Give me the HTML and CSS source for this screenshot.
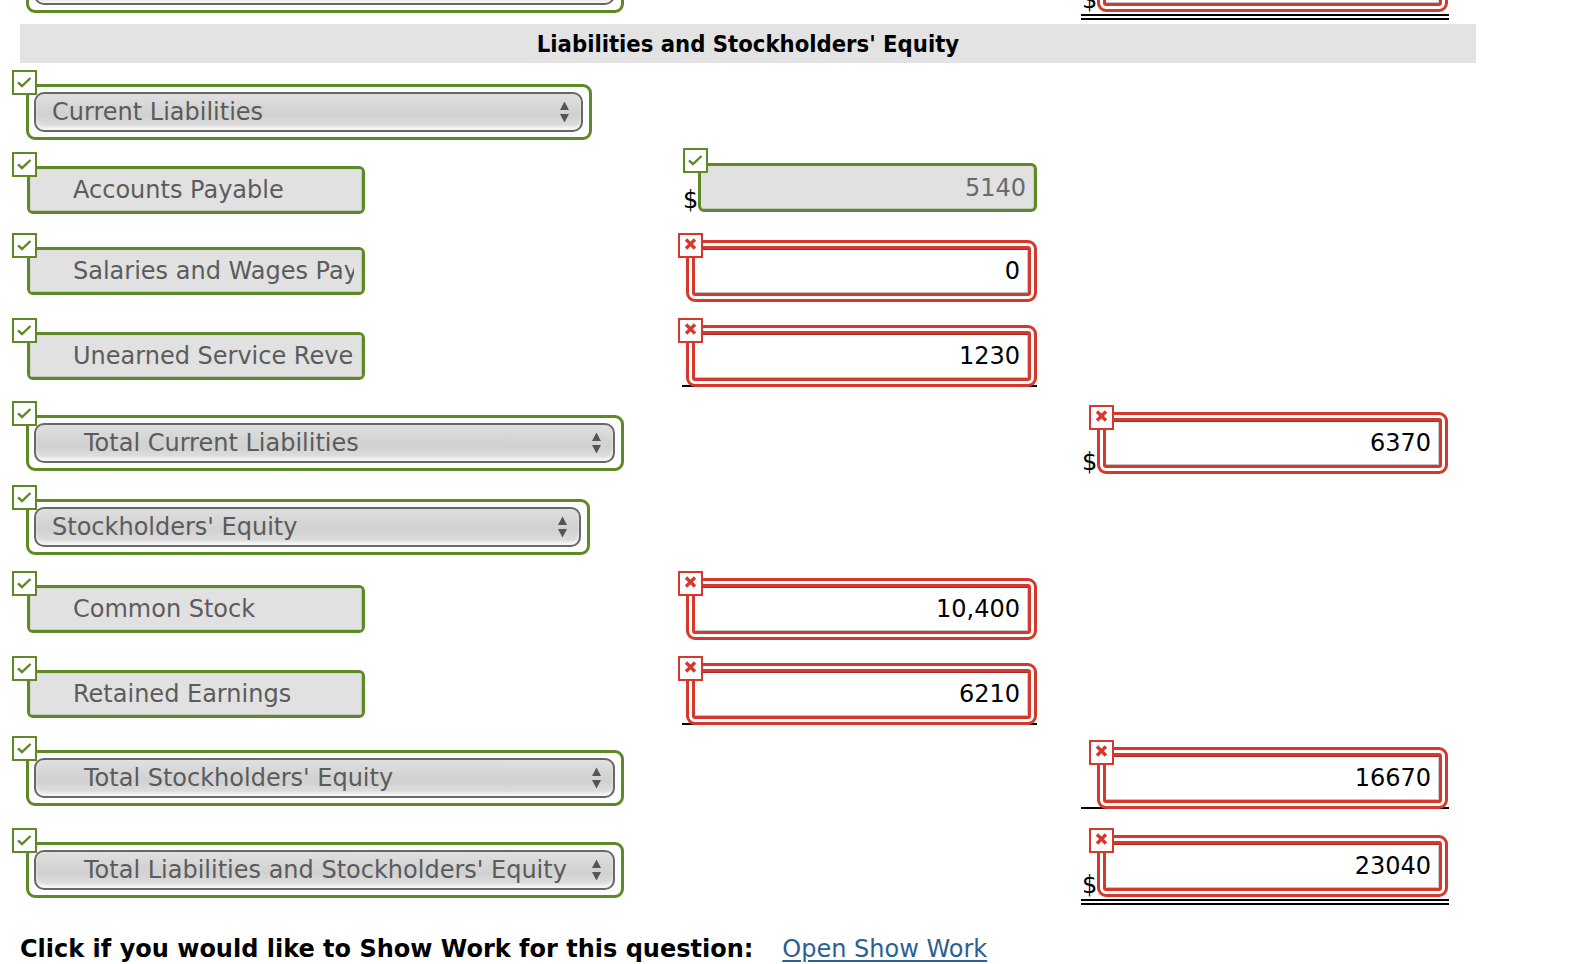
FILE: index.html
```html
<!DOCTYPE html>
<html lang="en">
<head>
<meta charset="utf-8">
<title>Liabilities and Stockholders' Equity</title>
<link rel="stylesheet" href="styles.css">
</head>
<body>
<div class="page">

  <div class="row row-first">
    <div class="c1">
      <div class="field field-sel">
        <svg class="badge" width="25" height="25" viewBox="0 0 25 25"><rect x="1" y="1" width="23" height="23" class="bx-ok"/><path d="M6 12.3 L10 16 L18.5 8" class="mk-ok"/></svg>
        <div class="sel-wrap w-wide"><div class="select indent"><span>Total Assets</span><svg class="arrows" width="11" height="24" viewBox="0 0 11 24"><path d="M1 10 L5.5 1.5 L10 10 Z M1 14 L10 14 L5.5 22.5 Z"/></svg></div></div>
      </div>
    </div>
    <div class="c2"></div>
    <div class="c3 dbl">
      <span class="dollar">$</span>
      <div class="field ring">
        <svg class="badge" width="25" height="25" viewBox="0 0 25 25"><rect x="1" y="1" width="23" height="23" class="bx-bad"/><path d="M8 6.5 L17 15.5 M17 6.5 L8 15.5" class="mk-bad"/></svg>
        <div class="ring-in">23040</div>
      </div>
    </div>
  </div>

  <div class="section-head">Liabilities and Stockholders' Equity</div>

  <div class="row row-sel">
    <div class="c1">
      <div class="field field-sel">
        <svg class="badge" width="25" height="25" viewBox="0 0 25 25"><rect x="1" y="1" width="23" height="23" class="bx-ok"/><path d="M6 12.3 L10 16 L18.5 8" class="mk-ok"/></svg>
        <div class="sel-wrap"><div class="select"><span>Current Liabilities</span><svg class="arrows" width="11" height="24" viewBox="0 0 11 24"><path d="M1 10 L5.5 1.5 L10 10 Z M1 14 L10 14 L5.5 22.5 Z"/></svg></div></div>
      </div>
    </div>
    <div class="c2"></div>
    <div class="c3"></div>
  </div>

  <div class="row row-green">
    <div class="c1">
      <div class="field field-lbl">
        <svg class="badge" width="25" height="25" viewBox="0 0 25 25"><rect x="1" y="1" width="23" height="23" class="bx-ok"/><path d="M6 12.3 L10 16 L18.5 8" class="mk-ok"/></svg>
        <div class="lbl"><div class="lbl-in"><span>Accounts Payable</span></div></div>
      </div>
    </div>
    <div class="c2 lift">
      <span class="dollar">$</span>
      <div class="field field-num">
        <svg class="badge" width="25" height="25" viewBox="0 0 25 25"><rect x="1" y="1" width="23" height="23" class="bx-ok"/><path d="M6 12.3 L10 16 L18.5 8" class="mk-ok"/></svg>
        <div class="num-ok">5140</div>
      </div>
    </div>
    <div class="c3"></div>
  </div>

  <div class="row">
    <div class="c1">
      <div class="field field-lbl">
        <svg class="badge" width="25" height="25" viewBox="0 0 25 25"><rect x="1" y="1" width="23" height="23" class="bx-ok"/><path d="M6 12.3 L10 16 L18.5 8" class="mk-ok"/></svg>
        <div class="lbl"><div class="lbl-in"><span>Salaries and Wages Payable</span></div></div>
      </div>
    </div>
    <div class="c2">
      <div class="field ring">
        <svg class="badge" width="25" height="25" viewBox="0 0 25 25"><rect x="1" y="1" width="23" height="23" class="bx-bad"/><path d="M8 6.5 L17 15.5 M17 6.5 L8 15.5" class="mk-bad"/></svg>
        <div class="ring-in">0</div>
      </div>
    </div>
    <div class="c3"></div>
  </div>

  <div class="row">
    <div class="c1">
      <div class="field field-lbl">
        <svg class="badge" width="25" height="25" viewBox="0 0 25 25"><rect x="1" y="1" width="23" height="23" class="bx-ok"/><path d="M6 12.3 L10 16 L18.5 8" class="mk-ok"/></svg>
        <div class="lbl"><div class="lbl-in"><span>Unearned Service Revenue</span></div></div>
      </div>
    </div>
    <div class="c2 ruled">
      <div class="field ring">
        <svg class="badge" width="25" height="25" viewBox="0 0 25 25"><rect x="1" y="1" width="23" height="23" class="bx-bad"/><path d="M8 6.5 L17 15.5 M17 6.5 L8 15.5" class="mk-bad"/></svg>
        <div class="ring-in">1230</div>
      </div>
    </div>
    <div class="c3"></div>
  </div>

  <div class="row row-total">
    <div class="c1">
      <div class="field field-sel">
        <svg class="badge" width="25" height="25" viewBox="0 0 25 25"><rect x="1" y="1" width="23" height="23" class="bx-ok"/><path d="M6 12.3 L10 16 L18.5 8" class="mk-ok"/></svg>
        <div class="sel-wrap w-wide"><div class="select indent"><span>Total Current Liabilities</span><svg class="arrows" width="11" height="24" viewBox="0 0 11 24"><path d="M1 10 L5.5 1.5 L10 10 Z M1 14 L10 14 L5.5 22.5 Z"/></svg></div></div>
      </div>
    </div>
    <div class="c2"></div>
    <div class="c3">
      <span class="dollar">$</span>
      <div class="field ring">
        <svg class="badge" width="25" height="25" viewBox="0 0 25 25"><rect x="1" y="1" width="23" height="23" class="bx-bad"/><path d="M8 6.5 L17 15.5 M17 6.5 L8 15.5" class="mk-bad"/></svg>
        <div class="ring-in">6370</div>
      </div>
    </div>
  </div>

  <div class="row row-sel">
    <div class="c1">
      <div class="field field-sel">
        <svg class="badge" width="25" height="25" viewBox="0 0 25 25"><rect x="1" y="1" width="23" height="23" class="bx-ok"/><path d="M6 12.3 L10 16 L18.5 8" class="mk-ok"/></svg>
        <div class="sel-wrap w-mid"><div class="select"><span>Stockholders' Equity</span><svg class="arrows" width="11" height="24" viewBox="0 0 11 24"><path d="M1 10 L5.5 1.5 L10 10 Z M1 14 L10 14 L5.5 22.5 Z"/></svg></div></div>
      </div>
    </div>
    <div class="c2"></div>
    <div class="c3"></div>
  </div>

  <div class="row">
    <div class="c1">
      <div class="field field-lbl">
        <svg class="badge" width="25" height="25" viewBox="0 0 25 25"><rect x="1" y="1" width="23" height="23" class="bx-ok"/><path d="M6 12.3 L10 16 L18.5 8" class="mk-ok"/></svg>
        <div class="lbl"><div class="lbl-in"><span>Common Stock</span></div></div>
      </div>
    </div>
    <div class="c2">
      <div class="field ring">
        <svg class="badge" width="25" height="25" viewBox="0 0 25 25"><rect x="1" y="1" width="23" height="23" class="bx-bad"/><path d="M8 6.5 L17 15.5 M17 6.5 L8 15.5" class="mk-bad"/></svg>
        <div class="ring-in">10,400</div>
      </div>
    </div>
    <div class="c3"></div>
  </div>

  <div class="row">
    <div class="c1">
      <div class="field field-lbl">
        <svg class="badge" width="25" height="25" viewBox="0 0 25 25"><rect x="1" y="1" width="23" height="23" class="bx-ok"/><path d="M6 12.3 L10 16 L18.5 8" class="mk-ok"/></svg>
        <div class="lbl"><div class="lbl-in"><span>Retained Earnings</span></div></div>
      </div>
    </div>
    <div class="c2 ruled">
      <div class="field ring">
        <svg class="badge" width="25" height="25" viewBox="0 0 25 25"><rect x="1" y="1" width="23" height="23" class="bx-bad"/><path d="M8 6.5 L17 15.5 M17 6.5 L8 15.5" class="mk-bad"/></svg>
        <div class="ring-in">6210</div>
      </div>
    </div>
    <div class="c3"></div>
  </div>

  <div class="row row-sub">
    <div class="c1">
      <div class="field field-sel">
        <svg class="badge" width="25" height="25" viewBox="0 0 25 25"><rect x="1" y="1" width="23" height="23" class="bx-ok"/><path d="M6 12.3 L10 16 L18.5 8" class="mk-ok"/></svg>
        <div class="sel-wrap w-wide"><div class="select indent"><span>Total Stockholders' Equity</span><svg class="arrows" width="11" height="24" viewBox="0 0 11 24"><path d="M1 10 L5.5 1.5 L10 10 Z M1 14 L10 14 L5.5 22.5 Z"/></svg></div></div>
      </div>
    </div>
    <div class="c2"></div>
    <div class="c3 ruled">
      <span class="dollar"></span>
      <div class="field ring">
        <svg class="badge" width="25" height="25" viewBox="0 0 25 25"><rect x="1" y="1" width="23" height="23" class="bx-bad"/><path d="M8 6.5 L17 15.5 M17 6.5 L8 15.5" class="mk-bad"/></svg>
        <div class="ring-in">16670</div>
      </div>
    </div>
  </div>

  <div class="row row-grand">
    <div class="c1">
      <div class="field field-sel">
        <svg class="badge" width="25" height="25" viewBox="0 0 25 25"><rect x="1" y="1" width="23" height="23" class="bx-ok"/><path d="M6 12.3 L10 16 L18.5 8" class="mk-ok"/></svg>
        <div class="sel-wrap w-wide"><div class="select indent"><span>Total Liabilities and Stockholders' Equity</span><svg class="arrows" width="11" height="24" viewBox="0 0 11 24"><path d="M1 10 L5.5 1.5 L10 10 Z M1 14 L10 14 L5.5 22.5 Z"/></svg></div></div>
      </div>
    </div>
    <div class="c2"></div>
    <div class="c3 dbl">
      <span class="dollar">$</span>
      <div class="field ring">
        <svg class="badge" width="25" height="25" viewBox="0 0 25 25"><rect x="1" y="1" width="23" height="23" class="bx-bad"/><path d="M8 6.5 L17 15.5 M17 6.5 L8 15.5" class="mk-bad"/></svg>
        <div class="ring-in">23040</div>
      </div>
    </div>
  </div>

  <p class="showwork"><b>Click if you would like to Show Work for this question:</b><a class="swlink" href="#">Open Show Work</a></p>

</div>
</body>
</html>
```

FILE: styles.css
```css
* { box-sizing: border-box; }

html, body {
  margin: 0;
  padding: 0;
  background: #ffffff;
  overflow: hidden;
}

body {
  font-family: "DejaVu Sans", Verdana, sans-serif;
  font-size: 24px;
  color: #000000;
}

.row {
  display: grid;
  grid-template-columns: 626px 355px 368px;
  column-gap: 44px;
  align-items: center;
  margin-left: 12px;
  height: 85px;
}

.row-first { height: 79px; margin-top: -55px; }
.row-sel { height: 79px; }
.row-green { height: 77px; }
.row-total { height: 89px; }
.row-sub { height: 84px; }
.row-grand { height: 100px; }

.section-head {
  margin: 0 0 9px 20px;
  width: 1456px;
  height: 39px;
  padding-top: 2px;
  background: #e3e3e3;
  text-align: center;
  font-family: "DejaVu Sans Condensed", "DejaVu Sans", sans-serif;
  font-stretch: condensed;
  font-weight: bold;
  font-size: 23.6px;
  line-height: 37px;
}

.c1 { padding-left: 14px; display: flex; }
.c2, .c3 { display: flex; align-items: flex-end; }
.c2.lift { padding-bottom: 4px; }

.ruled { border-bottom: 2px solid #000; }
.ruled .ring { margin-bottom: -2px; }
.dbl { border-bottom: 6px double #000; padding-bottom: 2px; }

.dollar {
  width: 16px;
  flex: none;
  line-height: 24px;
  padding-left: 1px;
}

.field { position: relative; }
.badge { position: absolute; z-index: 2; display: block; }
.field-lbl { margin-left: 1px; }
.field-lbl .badge { left: -15px; top: -14px; }
.field-sel .badge { left: -14px; top: -14px; }
.field-num .badge { left: -15px; top: -15px; }
.ring .badge { left: -11px; top: -10px; }

.bx-ok { fill: #ffffff; stroke: #5e8a26; stroke-width: 2; }
.mk-ok { fill: none; stroke: #5e8a26; stroke-width: 2.4; }
.bx-bad { fill: #ffffff; stroke: #d6382b; stroke-width: 2; }
.mk-bad { fill: none; stroke: #d6382b; stroke-width: 3.4; }

/* select dropdowns */
.sel-wrap {
  width: 566px;
  border: 3px solid #5e8a26;
  border-radius: 9px;
  padding: 5px 6px 5px 5px;
  background: #ffffff;
}
.sel-wrap.w-wide { width: 598px; }
.sel-wrap.w-mid { width: 564px; }

.select {
  height: 40px;
  border: 2px solid #686868;
  border-radius: 10px;
  background: linear-gradient(#e0e0e0 0%, #d4d4d4 40%, #d1d1d1 60%, #dcdcdc 85%, #ebebeb 100%);
  box-shadow: inset 0 -3px 3px rgba(255, 255, 255, 0.6);
  display: flex;
  align-items: center;
  justify-content: space-between;
  padding: 0 11px 0 16px;
  color: #5b5b5b;
  white-space: nowrap;
}
.select.indent { padding-left: 48px; }
.arrows { fill: #555555; flex: none; }

/* read-only account labels */
.lbl {
  width: 338px;
  height: 48px;
  border: 3px solid #5e8a26;
  border-radius: 6px;
  background: #e1e1e1;
  overflow: hidden;
}
.lbl-in {
  height: 100%;
  border: 1px solid #c6c6c6;
  border-top-color: #dadada;
  border-left-color: #d4d4d4;
  display: flex;
  align-items: center;
  padding: 1px 7px 0 42px;
  color: #5c5c5c;
}
.lbl-in span { overflow: hidden; white-space: nowrap; }

/* correct numeric field */
.num-ok {
  width: 339px;
  height: 49px;
  border: 3px solid #5e8a26;
  border-radius: 6px;
  background: #e1e1e1;
  box-shadow: inset 0 -1px 0 #c4c4c4, inset -1px 0 0 #cfcfcf;
  display: flex;
  align-items: center;
  justify-content: flex-end;
  padding-right: 8px;
  color: #6a6a6a;
}

/* incorrect numeric field */
.ring {
  width: 351px;
  height: 62px;
  flex: none;
  border: 3px solid #d6382b;
  border-radius: 9px;
  padding: 3px;
  background: #ffffff;
}
.c2 > .ring:first-child { margin-left: 4px; }
.ring-in {
  height: 100%;
  border: 3px solid #d6382b;
  border-radius: 3px;
  box-shadow: inset 0 1px 0 #a82a20, inset 0 -1px 0 #c2c2c2, inset -1px 0 0 #cfcfcf;
  background: #ffffff;
  display: flex;
  align-items: center;
  justify-content: flex-end;
  padding-right: 8px;
  color: #000000;
}

.showwork {
  margin: 15px 0 0 20px;
  line-height: 28px;
  white-space: nowrap;
}
.showwork b { font-weight: bold; }
.swlink {
  margin-left: 29px;
  color: #2c5f93;
  text-decoration: underline;
  text-decoration-thickness: 2px;
  text-underline-offset: 3px;
}
```
